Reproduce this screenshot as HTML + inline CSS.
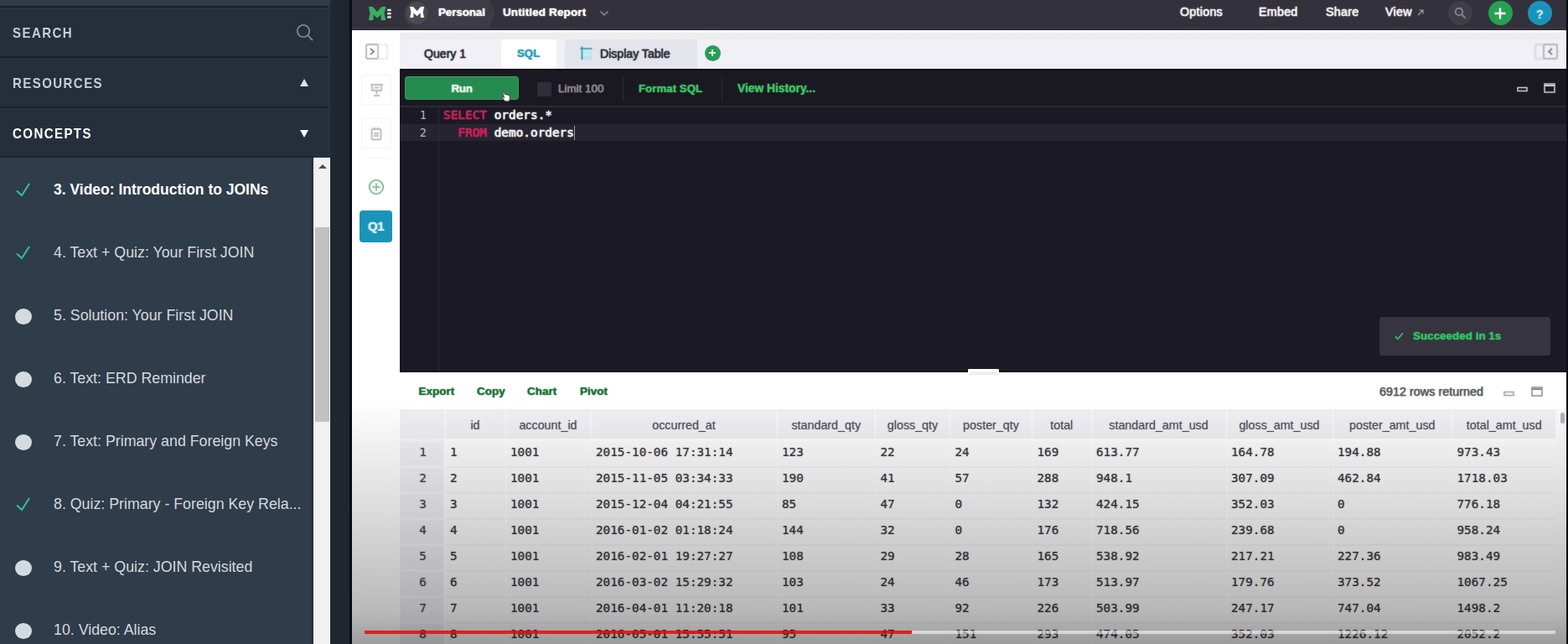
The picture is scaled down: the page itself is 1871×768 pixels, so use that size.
<!DOCTYPE html>
<html lang="en">
<head>
<meta charset="utf-8">
<title>Introduction to JOINs</title>
<style>
*{box-sizing:border-box;margin:0;padding:0}
html,body{width:1871px;height:768px;overflow:hidden;background:#20262d;font-family:"Liberation Sans",sans-serif}
.abs{position:absolute}
/* ---------- sidebar ---------- */
.side{position:absolute;left:0;top:0;width:395px;height:768px;background:#2a343f;overflow:hidden}
.strip{position:absolute;left:0;top:0;width:395px;height:8px;background:#303b47}
.sec{position:absolute;left:0;width:392px;height:60px;background:#252f3b;border-top:2px solid #18222d}
.sec:before{content:"";position:absolute;left:0;top:1px;width:392px;height:1px;background:#2d3844}
.sec .lbl{position:absolute;left:15px;top:20.7px;font:bold 17px/20px "Liberation Sans",sans-serif;letter-spacing:1.6px;color:#c7cdd3;white-space:nowrap;transform:scaleX(.885);transform-origin:0 50%}
.sec .lbl.on{color:#fff}
.tri{position:absolute;left:358.2px;width:0;height:0;border-left:5px solid transparent;border-right:5px solid transparent}
.tri.up{top:25px;border-bottom:9px solid #dfe3e8}
.tri.down{top:25.5px;border-top:9px solid #fff}
.list{position:absolute;left:0;top:188px;width:395px;height:580px;background:#2f3c4a}
.lsep{position:absolute;left:0;top:186px;width:374px;height:2px;background:#19232e}
.lessons{list-style:none;position:absolute;left:0;top:0;width:374px;height:580px}
.lessons li{position:absolute;left:0;width:374px;height:75px}
.lessons .t{position:absolute;left:64px;top:27px;font:17.8px/22px "Liberation Sans",sans-serif;color:#d4d9de;white-space:nowrap}
.lessons .act .t{font-weight:bold;color:#fff;font-size:17.5px}
.ck{position:absolute;left:17px;top:28px;width:22px;height:22px;fill:none;stroke:#2cc3a5;stroke-width:2}
.dot{position:absolute;left:18.2px;top:29.5px;width:19.8px;height:19px;border-radius:50%;background:#d3dbe1}
.sbar{position:absolute;left:371px;top:0;width:24px;height:580px;background:#f1f1f1;border-left:3px solid #27323d}
.sbar .thumb{position:absolute;left:2px;top:83px;width:17px;height:232px;background:#c1c1c1}
.sbar .arr{position:absolute;left:6px;top:8px;width:0;height:0;border-left:5px solid transparent;border-right:5px solid transparent;border-bottom:5px solid #505050}
/* ---------- video ---------- */
.gapl{position:absolute;left:394px;top:0;width:6px;height:768px;background:#1d2833}
.edge{position:absolute;left:417px;top:0;width:1454px;height:768px;background:#0a0d12}
.video{position:absolute;left:419.5px;top:-6px;width:1449.5px;height:780px;background:#fff;overflow:hidden}
.video .tx,.video .code{text-shadow:0 0 1.6px currentColor}
.video .c,.video .rn{text-shadow:0 0 1.6px rgba(50,50,56,.4)}
.video .hc{text-shadow:0 0 1.6px rgba(70,70,80,.4)}
.video svg{filter:drop-shadow(0 0 .8px rgba(128,128,128,.35))}
.vin{position:absolute;left:.5px;top:6px;width:1449px;height:768px}
.vtopfill{position:absolute;left:0;top:0;width:1450px;height:8px;background:#33313c}
.ovl{position:absolute;left:420px;top:0;width:1449px;height:768px;overflow:hidden}
.topbar{position:absolute;left:0;top:0;width:1451px;height:36.5px;background:#33313c;box-shadow:inset 0 -2px 0 #201e28,inset 0 -3.5px 0 #3f3d49}
.topbar .tx{position:absolute;top:5.5px;font:bold 13.5px/18px "Liberation Sans",sans-serif;color:#fff;white-space:nowrap}
.topbar .tr{top:4.7px;font-weight:normal;font-size:14.3px;letter-spacing:.25px;color:#f0f0f2;-webkit-text-stroke:.4px #f0f0f2}
.pill{position:absolute;left:62px;top:0;width:102px;height:32.5px;background:#3d3b45;border-radius:16px 0 0 16px}
.pill:after{content:"";position:absolute;left:102px;top:0;width:0;height:0;border-top:16.25px solid transparent;border-bottom:16.25px solid transparent;border-left:7px solid #3d3b45}
.circ{position:absolute;border-radius:50%}
.rail{position:absolute;left:0;top:36px;width:57px;height:742px;background:#fff}
.tabs{position:absolute;left:57px;top:36px;width:1394px;height:46px;background:linear-gradient(to bottom,#fff 0,#fff 2.3px,#edecf1 3px,#eeeeee 11px,#f0f0f6 12px)}
.tabs .tx{position:absolute;top:19px;font:14.1px/18px "Liberation Sans",sans-serif;color:#34343c;-webkit-text-stroke:.45px #34343c;white-space:nowrap}
.tab{position:absolute;top:11px;height:35px;border-radius:4px 4px 0 0}
.etool{position:absolute;left:57px;top:82px;width:1394px;height:46px;background:#1a1922;border-bottom:2px solid #2b2a34;box-shadow:inset 0 2px 0 #0e0c17;z-index:2}
.etool .tx{position:absolute;top:15px;font:bold 13.5px/18px "Liberation Sans",sans-serif;color:#3cc464;white-space:nowrap}
.run{position:absolute;left:6px;top:9px;width:136px;height:28px;border-radius:4px;background:#268b4e;border:1px solid #3a9660;border-top-color:#4a9f6c;color:#e6fbea;font:bold 13.5px/27px "Liberation Sans",sans-serif;letter-spacing:-.4px;text-align:center}
.vdiv{position:absolute;top:10px;width:1px;height:28px;background:#2d2c36}
.editor{position:absolute;left:57px;top:126px;width:1394px;height:318.5px;box-shadow:inset 0 -3px 0 #0c0c11;background:#1b1a24}
.editor .gut{position:absolute;left:46px;top:0;width:1px;height:318px;background:#2a2933}
.editor .hl{position:absolute;left:0;top:22px;width:1394px;height:20px;background:#26252f}
.editor .ln{position:absolute;left:0;width:32px;text-align:right;font:13.5px/21px "DejaVu Sans Mono","Liberation Mono",monospace;color:#b4b4bb}
.editor .code{position:absolute;left:52px;font:14.4px/21px "DejaVu Sans Mono","Liberation Mono",monospace;color:#f4f4f6;-webkit-text-stroke:.3px #f4f4f6;white-space:pre}
.editor .kw{color:#cb1f5c;-webkit-text-stroke:.5px #cb1f5c}
.toast{position:absolute;left:1226px;top:378px;width:204px;height:46px;background:#36343e;border-radius:3px}
.toast .tx{position:absolute;left:40px;top:14px;font:bold 13.45px/18px "Liberation Sans",sans-serif;color:#2fc563;white-space:nowrap}
.rtool{position:absolute;left:57px;top:444px;width:1394px;height:44px;background:#fff}
.rtool .tx{position:absolute;top:14px;font:bold 13.5px/18px "Liberation Sans",sans-serif;color:#1f7337;white-space:nowrap}
.rtool .cnt{font-weight:normal;font-size:14.4px;color:#5a5a62;-webkit-text-stroke:.25px #5a5a62}
.grid{position:absolute;left:57px;top:488px;width:1394px;height:290px;background:#fff;overflow:hidden}
.ghead{position:absolute;left:0;top:0;width:1380px;height:35px;background:#f6f6f9}
.hc{position:absolute;top:0;height:35px;background:#f0f0f5;text-align:center;font:14.3px/38px "Liberation Sans",sans-serif;color:#4e4e57;white-space:nowrap}
.grow{position:absolute;left:0;width:1380px;height:31px}
.rncol{position:absolute;left:0;top:35px;width:52.5px;height:260px;background:#f7f7fa}
.grow .c{position:absolute;top:0;height:31px;background:#fcfcfc;border-bottom:2px solid #f5f5f5;font:14.3px/25px "DejaVu Sans Mono","Liberation Mono",monospace;color:#3a3a40;-webkit-text-stroke:.15px #3a3a40;padding-left:4.5px;white-space:nowrap}

.grow .rn{position:absolute;top:0;height:28px;background:#f0f0f5;text-align:center;padding-left:2.5px;font:14.3px/25px "DejaVu Sans Mono","Liberation Mono",monospace;color:#4c4c54;-webkit-text-stroke:.15px #4c4c54;white-space:nowrap}
.shade{position:absolute;left:0;top:486px;width:1451px;height:282px;background:linear-gradient(to bottom,rgba(0,0,0,.012) 0%,rgba(0,0,0,.13) 40.4%,rgba(0,0,0,.24) 75.9%,rgba(0,0,0,.275) 86.5%,rgba(0,0,0,.385) 100%)}
.prog{position:absolute;left:15px;top:752px;width:1421px;height:3.800px;background:linear-gradient(to right,rgba(0,0,0,0) 653px,rgba(255,255,255,.55) 653px)}
.prog i{position:absolute;left:0;top:0;width:653px;height:4px;background:rgba(240,0,0,.82)}
</style>
</head>
<body>
<div class="side">
<div class="strip"></div>
<div class="sec" style="top:7px"><span class="lbl">SEARCH</span>
<svg class="abs" style="left:352px;top:18px" width="24" height="24" viewBox="0 0 24 24" fill="none" stroke="#7d8791" stroke-width="1.8"><circle cx="10" cy="10" r="7.2"/><path d="M15.4 15.4 L21 21"/></svg>
</div>
<div class="sec" style="top:67px"><span class="lbl">RESOURCES</span><span class="tri up"></span></div>
<div class="sec" style="top:127px"><span class="lbl on">CONCEPTS</span><span class="tri down"></span></div>
<div class="lsep"></div>
<div class="list">
<ul class="lessons">
<li class="act" style="top:0px"><svg class="ck" viewBox="0 0 22 22"><path d="M3 11.5 L9 17 L18 3" /></svg><span class="t">3. Video: Introduction to JOINs</span></li>
<li class="" style="top:75px"><svg class="ck" viewBox="0 0 22 22"><path d="M3 11.5 L9 17 L18 3" /></svg><span class="t">4. Text + Quiz: Your First JOIN</span></li>
<li class="" style="top:150px"><span class="dot"></span><span class="t">5. Solution: Your First JOIN</span></li>
<li class="" style="top:225px"><span class="dot"></span><span class="t">6. Text: ERD Reminder</span></li>
<li class="" style="top:300px"><span class="dot"></span><span class="t">7. Text: Primary and Foreign Keys</span></li>
<li class="" style="top:375px"><svg class="ck" viewBox="0 0 22 22"><path d="M3 11.5 L9 17 L18 3" /></svg><span class="t">8. Quiz: Primary - Foreign Key Rela...</span></li>
<li class="" style="top:450px"><span class="dot"></span><span class="t">9. Text + Quiz: JOIN Revisited</span></li>
<li class="" style="top:525px"><span class="dot"></span><span class="t">10. Video: Alias</span></li>
</ul>
<div class="sbar"><span class="arr"></span><span class="thumb"></span></div>
</div>
</div>
<div class="gapl"></div>
<div class="edge"></div>
<div class="video">
<div class="vtopfill"></div>
<div class="vin">
<div class="topbar">
<svg class="abs" style="left:20.4px;top:7.5px" width="28" height="16" viewBox="0 0 28 16"><path d="M0 0 H4.600 L10.100 6.400 L15.600 0 H20.200 L18.400 8 L20.200 16 H14.800 V9.200 L10.100 13.400 L5.400 9.200 V16 H0 L1.800 8 Z" fill="#38b064"/><rect x="22.200" y="2.800" width="4.400" height="2.400" fill="#e4e4e8"/><rect x="22.200" y="7" width="4.400" height="2.400" fill="#e4e4e8"/><rect x="22.200" y="11.200" width="4.400" height="2.400" fill="#e4e4e8"/></svg>
<div class="pill"></div>
<div class="circ" style="left:62.900px;top:.8px;width:29.400px;height:29.400px;background:#4b4953;border:1.2px solid #37353e"></div>
<svg class="abs" style="left:68.800px;top:8px" width="17.200" height="13.400" viewBox="0 0 20.200 16"><path d="M0 0 H4.600 L10.100 6.400 L15.600 0 H20.200 L18.600 8 L20.200 16 H15.200 V8.800 L10.100 13.400 L5 8.800 V16 H0 L1.600 8 Z" fill="#fff"/></svg>
<span class="tx" style="left:103px;letter-spacing:-.15px">Personal</span>
<span class="tx" style="left:180px;letter-spacing:.12px">Untitled Report</span>
<svg class="abs" style="left:295px;top:11.5px" width="12" height="8" viewBox="0 0 12 8" fill="none" stroke="#8d8c94" stroke-width="1.4"><path d="M1.5 1.5 L6 6 L10.5 1.5"/></svg>
<span class="tx tr" style="left:988px">Options</span>
<span class="tx tr" style="left:1082px">Embed</span>
<span class="tx tr" style="left:1162px">Share</span>
<span class="tx tr" style="left:1233px">View</span>
<svg class="abs" style="left:1270px;top:9.5px" width="10" height="10" viewBox="0 0 10 10" fill="none" stroke="#9b9aa2" stroke-width="1.2"><path d="M2 8 L8 2 M3.5 2 H8 V6.5"/></svg>
<div class="circ" style="left:1308px;top:1px;width:29px;height:29px;background:#3f3d47"></div>
<svg class="abs" style="left:1315px;top:8px" width="15" height="15" viewBox="0 0 15 15" fill="none" stroke="#8f8e96" stroke-width="1.5"><circle cx="6" cy="6" r="4.3"/><path d="M9.3 9.3 L13.5 13.5"/></svg>
<div class="circ" style="left:1355.5px;top:1px;width:29px;height:29px;background:#25a150"></div>
<svg class="abs" style="left:1362px;top:7.5px" width="16" height="16" viewBox="0 0 16 16" fill="none" stroke="#fff" stroke-width="2.4"><path d="M8 1.5 V14.5 M1.5 8 H14.5"/></svg>
<div class="circ" style="left:1402.5px;top:1px;width:29px;height:29px;background:#1a93bb"></div>
<span class="tx" style="left:1413px;top:7.5px;color:#bfe6f4;font-size:14px">?</span>
</div>
<div class="rail">
<svg class="abs" style="left:16px;top:16px" width="28" height="19" viewBox="0 0 28 19" fill="none"><rect x="1" y="1" width="14" height="17" rx="1.5" stroke="#b3b3b8" stroke-width="1.4"/><rect x="15" y="1" width="11" height="17" stroke="#dededf" stroke-width="1" stroke-dasharray="2 1.5"/><path d="M6 6 L10 9.5 L6 13" stroke="#8e8e93" stroke-width="1.8"/></svg>
<div class="abs" style="left:11px;top:53px;width:36px;height:36px;border:1px solid #f4f4f5;border-radius:3px"></div>
<svg class="abs" style="left:21px;top:63px" width="17" height="18" viewBox="0 0 17 18" fill="none" stroke="#b9b9be" stroke-width="1.4"><path d="M1 2 H16 M3 2 V9 H14 V2 M8.5 9 V13 M5 15 H12"/><path d="M6 5.5 H11"/></svg>
<div class="abs" style="left:11px;top:105px;width:36px;height:36px;border:1px solid #f4f4f5;border-radius:3px"></div>
<svg class="abs" style="left:22px;top:115px" width="14" height="17" viewBox="0 0 14 17" fill="none" stroke="#b9b9be" stroke-width="1.4"><rect x="1.5" y="3" width="11" height="12.5" rx="1.5"/><path d="M4.5 1 V4 M9.5 1 V4 M4 8 H10 M4 11 H10"/></svg>
<div class="abs" style="left:15px;top:152px;width:28px;height:1px;background:#f4f4f5"></div>
<svg class="abs" style="left:18px;top:176px" width="22" height="22" viewBox="0 0 22 22" fill="none" stroke="#7db596" stroke-width="1.5"><circle cx="11" cy="11" r="8.200" fill="#eff7f2"/><path d="M11 6.5 V15.5 M6.5 11 H15.500"/></svg>
<div class="abs" style="left:9px;top:215px;width:39px;height:38px;border-radius:4px;background:#1a94b8;color:#d8f1f9;font:bold 15px/38px 'Liberation Sans',sans-serif;text-align:center;letter-spacing:-.5px"><span class="tx" style="position:static;font:inherit;color:inherit">Q1</span></div>
</div>
<div class="tabs">
<span class="tx" style="left:29px">Query 1</span>
<div class="tab" style="left:121px;width:66px;background:#fff"></div>
<span class="tx" style="left:140px;color:#2d9bbb;font-weight:bold;font-size:13.3px;-webkit-text-stroke:0">SQL</span>
<div class="tab" style="left:196.5px;width:158px;background:#e3e5ed"></div>
<svg class="abs" style="left:215px;top:19px" width="16" height="17" viewBox="0 0 16 17" fill="none"><rect x="3" y="3" width="10" height="12.500" fill="#b9e6f0"/><path d="M3.500 7 H13 M3.500 10.500 H13" stroke="#d9f1f6" stroke-width="1"/><path d="M2.500 .5 V16 M.5 3 H14.500" stroke="#3f9fb6" stroke-width="1.700"/></svg>
<span class="tx" style="left:239px">Display Table</span>
<div class="circ" style="left:363.800px;top:17.5px;width:19px;height:19px;background:#289c56"></div>
<svg class="abs" style="left:368.300px;top:22px" width="10" height="10" viewBox="0 0 10 10" fill="none" stroke="#d4f5dc" stroke-width="2"><path d="M5 1 V9 M1 5 H9"/></svg>
<svg class="abs" style="left:1354px;top:16px" width="28" height="19" viewBox="0 0 28 19" fill="none"><rect x="1" y="1" width="10" height="17" stroke="#dcdce0" stroke-width="1"/><rect x="11" y="1" width="16" height="17" rx="1.5" stroke="#b3b3b8" stroke-width="1.4"/><path d="M21 6 L17 9.5 L21 13" stroke="#8e8e93" stroke-width="1.8"/></svg>
</div>
<div class="etool">
<div class="run"><span class="tx" style="position:static;font:inherit;color:inherit">Run</span></div>
<svg class="abs" style="left:120.5px;top:25.5px" width="12" height="14" viewBox="0 0 12 14"><path d="M3 1.2 L4.8 5 L6.2 4.600 L7.600 5.200 L9 5.400 L10.400 6.400 L10.400 10 L9.400 12.800 L4.600 12.800 L1.400 8.400 L2.400 7.600 L3.600 8.600 L1.800 2 Z" fill="#fff" stroke="#222" stroke-width=".8"/></svg>
<div class="abs cb" style="left:163.5px;top:15.5px;width:17px;height:17px;background:#2f2e38;border-radius:2px"></div>
<span class="tx" style="left:189px;font-weight:normal;font-size:13.4px;color:#8d8c95;-webkit-text-stroke:.3px #8d8c95">Limit 100</span>
<div class="vdiv" style="left:266px"></div>
<span class="tx" style="left:285px;font-size:13.3px">Format SQL</span>
<div class="vdiv" style="left:384px"></div>
<span class="tx" style="left:403px;font-size:13.8px">View History...</span>
<svg class="abs" style="left:1333px;top:20px" width="13" height="8" viewBox="0 0 13 8" fill="none" stroke="#c9c9cf" stroke-width="1.4"><rect x="1" y="2.5" width="11" height="4"/></svg>
<svg class="abs" style="left:1365px;top:17px" width="14" height="12" viewBox="0 0 14 12" fill="none" stroke="#c9c9cf" stroke-width="1.4"><rect x="1" y="1" width="12" height="10"/><path d="M1 3 H13" stroke-width="2"/></svg>
</div>
<div class="editor">
<div class="hl"></div>
<div class="gut"></div>
<span class="ln" style="top:1px">1</span>
<span class="ln" style="top:22px">2</span>
<span class="code" style="top:1px"><span class="kw">SELECT</span> orders.*</span>
<span class="code" style="top:22px">  <span class="kw">FROM</span> demo.orders</span>
<div class="abs" style="left:208px;top:24px;width:1px;height:17px;background:#9a99a2"></div>
</div>
<div class="toast">
<svg class="abs" style="left:18px;top:18px" width="11" height="10" viewBox="0 0 11 10" fill="none" stroke="#2fc563" stroke-width="1.6"><path d="M1.200 5.400 L4 8.400 L9.800 1.200"/></svg>
<span class="tx">Succeeded in 1s</span>
</div>
<div class="abs" style="left:734.5px;top:440.3px;width:37.5px;height:6.5px;background:#fff;border-bottom:1px solid #e2e2e5;border-radius:1px;z-index:3"><div class="abs" style="left:3px;top:3.600px;width:31px;height:1px;background:#dcdcdf"></div></div>
<div class="rtool">
<span class="tx" style="left:22.5px">Export</span>
<span class="tx" style="left:92px">Copy</span>
<span class="tx" style="left:152px">Chart</span>
<span class="tx" style="left:215px">Pivot</span>
<span class="tx cnt" style="left:1169px">6912 rows returned</span>
<svg class="abs" style="left:1317px;top:21px" width="13" height="8" viewBox="0 0 13 8" fill="none" stroke="#a5a5ab" stroke-width="1.3"><rect x="1" y="2.5" width="11" height="4"/></svg>
<svg class="abs" style="left:1350px;top:17px" width="14" height="12" viewBox="0 0 14 12" fill="none" stroke="#8c8c93" stroke-width="1.3"><rect x="1" y="1" width="12" height="10"/><path d="M1 3 H13" stroke-width="2"/></svg>
</div>
<div class="grid">
<div class="rncol"></div>
<div class="ghead">
<div class="hc" style="left:0;width:52.5px"></div>
<div class="hc" style="left:55.5px;width:69px">id</div>
<div class="hc" style="left:127.5px;width:99px">account_id</div>
<div class="hc" style="left:229.5px;width:219px">occurred_at</div>
<div class="hc" style="left:451.5px;width:114.5px">standard_qty</div>
<div class="hc" style="left:569.0px;width:86.0px">gloss_qty</div>
<div class="hc" style="left:658.0px;width:95.0px">poster_qty</div>
<div class="hc" style="left:756.0px;width:67.5px">total</div>
<div class="hc" style="left:826.5px;width:158px">standard_amt_usd</div>
<div class="hc" style="left:987.5px;width:124px">gloss_amt_usd</div>
<div class="hc" style="left:1114.5px;width:139.5px">poster_amt_usd</div>
<div class="hc" style="left:1257.0px;width:121.5px">total_amt_usd</div>
</div>
<div class="grow" style="top:39px">
<div class="rn" style="left:.5px;width:51.5px">1</div><div class="c" style="left:55.5px;width:70.5px">1</div><div class="c" style="left:127.5px;width:100.5px">1001</div><div class="c" style="left:229.5px;width:220.5px">2015-10-06 17:31:14</div><div class="c" style="left:451.5px;width:116.0px">123</div><div class="c" style="left:569.0px;width:87.5px">22</div><div class="c" style="left:658.0px;width:96.5px">24</div><div class="c" style="left:756.0px;width:69.0px">169</div><div class="c" style="left:826.5px;width:159.5px">613.77</div><div class="c" style="left:987.5px;width:125.5px">164.78</div><div class="c" style="left:1114.5px;width:141.0px">194.88</div><div class="c" style="left:1257.0px;width:123.0px">973.43</div>
</div>
<div class="grow" style="top:70px">
<div class="rn" style="left:.5px;width:51.5px">2</div><div class="c" style="left:55.5px;width:70.5px">2</div><div class="c" style="left:127.5px;width:100.5px">1001</div><div class="c" style="left:229.5px;width:220.5px">2015-11-05 03:34:33</div><div class="c" style="left:451.5px;width:116.0px">190</div><div class="c" style="left:569.0px;width:87.5px">41</div><div class="c" style="left:658.0px;width:96.5px">57</div><div class="c" style="left:756.0px;width:69.0px">288</div><div class="c" style="left:826.5px;width:159.5px">948.1</div><div class="c" style="left:987.5px;width:125.5px">307.09</div><div class="c" style="left:1114.5px;width:141.0px">462.84</div><div class="c" style="left:1257.0px;width:123.0px">1718.03</div>
</div>
<div class="grow" style="top:101px">
<div class="rn" style="left:.5px;width:51.5px">3</div><div class="c" style="left:55.5px;width:70.5px">3</div><div class="c" style="left:127.5px;width:100.5px">1001</div><div class="c" style="left:229.5px;width:220.5px">2015-12-04 04:21:55</div><div class="c" style="left:451.5px;width:116.0px">85</div><div class="c" style="left:569.0px;width:87.5px">47</div><div class="c" style="left:658.0px;width:96.5px">0</div><div class="c" style="left:756.0px;width:69.0px">132</div><div class="c" style="left:826.5px;width:159.5px">424.15</div><div class="c" style="left:987.5px;width:125.5px">352.03</div><div class="c" style="left:1114.5px;width:141.0px">0</div><div class="c" style="left:1257.0px;width:123.0px">776.18</div>
</div>
<div class="grow" style="top:132px">
<div class="rn" style="left:.5px;width:51.5px">4</div><div class="c" style="left:55.5px;width:70.5px">4</div><div class="c" style="left:127.5px;width:100.5px">1001</div><div class="c" style="left:229.5px;width:220.5px">2016-01-02 01:18:24</div><div class="c" style="left:451.5px;width:116.0px">144</div><div class="c" style="left:569.0px;width:87.5px">32</div><div class="c" style="left:658.0px;width:96.5px">0</div><div class="c" style="left:756.0px;width:69.0px">176</div><div class="c" style="left:826.5px;width:159.5px">718.56</div><div class="c" style="left:987.5px;width:125.5px">239.68</div><div class="c" style="left:1114.5px;width:141.0px">0</div><div class="c" style="left:1257.0px;width:123.0px">958.24</div>
</div>
<div class="grow" style="top:163px">
<div class="rn" style="left:.5px;width:51.5px">5</div><div class="c" style="left:55.5px;width:70.5px">5</div><div class="c" style="left:127.5px;width:100.5px">1001</div><div class="c" style="left:229.5px;width:220.5px">2016-02-01 19:27:27</div><div class="c" style="left:451.5px;width:116.0px">108</div><div class="c" style="left:569.0px;width:87.5px">29</div><div class="c" style="left:658.0px;width:96.5px">28</div><div class="c" style="left:756.0px;width:69.0px">165</div><div class="c" style="left:826.5px;width:159.5px">538.92</div><div class="c" style="left:987.5px;width:125.5px">217.21</div><div class="c" style="left:1114.5px;width:141.0px">227.36</div><div class="c" style="left:1257.0px;width:123.0px">983.49</div>
</div>
<div class="grow" style="top:194px">
<div class="rn" style="left:.5px;width:51.5px">6</div><div class="c" style="left:55.5px;width:70.5px">6</div><div class="c" style="left:127.5px;width:100.5px">1001</div><div class="c" style="left:229.5px;width:220.5px">2016-03-02 15:29:32</div><div class="c" style="left:451.5px;width:116.0px">103</div><div class="c" style="left:569.0px;width:87.5px">24</div><div class="c" style="left:658.0px;width:96.5px">46</div><div class="c" style="left:756.0px;width:69.0px">173</div><div class="c" style="left:826.5px;width:159.5px">513.97</div><div class="c" style="left:987.5px;width:125.5px">179.76</div><div class="c" style="left:1114.5px;width:141.0px">373.52</div><div class="c" style="left:1257.0px;width:123.0px">1067.25</div>
</div>
<div class="grow" style="top:225px">
<div class="rn" style="left:.5px;width:51.5px">7</div><div class="c" style="left:55.5px;width:70.5px">7</div><div class="c" style="left:127.5px;width:100.5px">1001</div><div class="c" style="left:229.5px;width:220.5px">2016-04-01 11:20:18</div><div class="c" style="left:451.5px;width:116.0px">101</div><div class="c" style="left:569.0px;width:87.5px">33</div><div class="c" style="left:658.0px;width:96.5px">92</div><div class="c" style="left:756.0px;width:69.0px">226</div><div class="c" style="left:826.5px;width:159.5px">503.99</div><div class="c" style="left:987.5px;width:125.5px">247.17</div><div class="c" style="left:1114.5px;width:141.0px">747.04</div><div class="c" style="left:1257.0px;width:123.0px">1498.2</div>
</div>
<div class="grow" style="top:256px">
<div class="rn" style="left:.5px;width:51.5px">8</div><div class="c" style="left:55.5px;width:70.5px">8</div><div class="c" style="left:127.5px;width:100.5px">1001</div><div class="c" style="left:229.5px;width:220.5px">2016-05-01 15:55:51</div><div class="c" style="left:451.5px;width:116.0px">95</div><div class="c" style="left:569.0px;width:87.5px">47</div><div class="c" style="left:658.0px;width:96.5px">151</div><div class="c" style="left:756.0px;width:69.0px">293</div><div class="c" style="left:826.5px;width:159.5px">474.05</div><div class="c" style="left:987.5px;width:125.5px">352.03</div><div class="c" style="left:1114.5px;width:141.0px">1226.12</div><div class="c" style="left:1257.0px;width:123.0px">2052.2</div>
</div>
</div>
<div class="abs" style="left:1436px;top:488px;width:13px;height:290px;background:#fbfbfc"></div>
<div class="abs" style="left:1442px;top:492px;width:5px;height:13px;border-radius:3px;background:#b4b4ba"></div>
</div>
</div>
<div class="ovl">
<div class="shade"></div>
<div class="prog"><i></i></div>
</div>
</body>
</html>
